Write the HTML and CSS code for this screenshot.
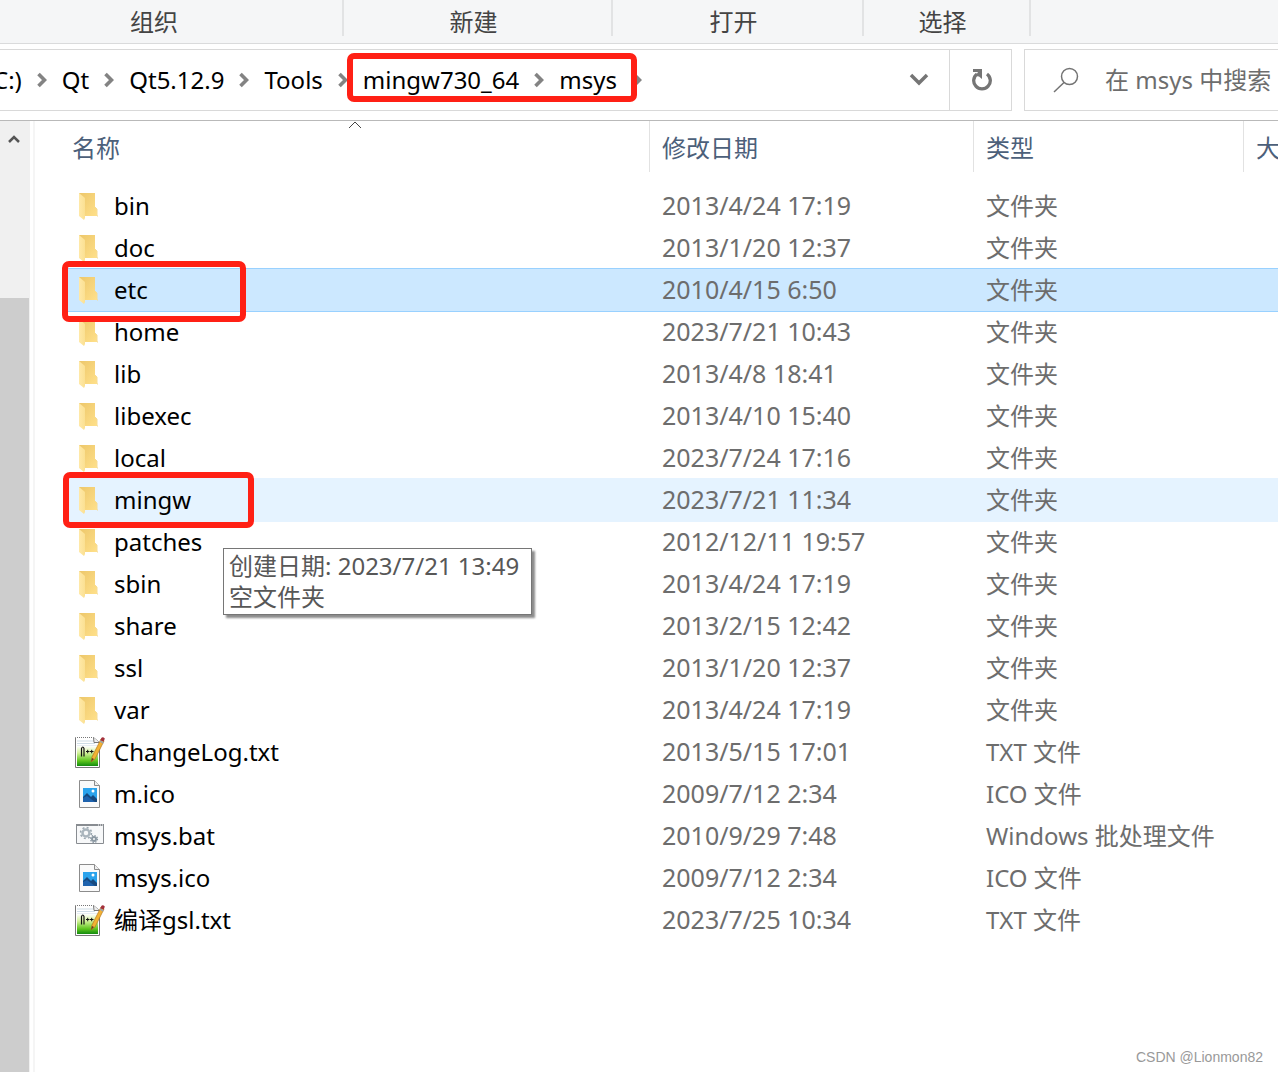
FILE: index.html
```
<!DOCTYPE html>
<html lang="zh-CN">
<head>
    <meta charset="UTF-8">
    <meta name="viewport" content="width=device-width, initial-scale=1.0">
    <title>msys</title>
    <link rel="stylesheet" href="styles.css">
</head>
<body>
    <!-- icons -->
    <svg class="defs" width="0" height="0">
        <defs>
            <linearGradient id="fold-front" x1="0" y1="0" x2="1" y2="0">
                <stop offset="0" stop-color="#ffe9a8"/>
                <stop offset="1" stop-color="#fbe092"/>
            </linearGradient>
            <linearGradient id="fold-back" x1="0" y1="0" x2="1" y2="1">
                <stop offset="0" stop-color="#edc76a"/>
                <stop offset="1" stop-color="#ffe08a"/>
            </linearGradient>
            <linearGradient id="note-green" x1="0" y1="0" x2="0" y2="1">
                <stop offset="0" stop-color="#ffffff"/>
                <stop offset="0.35" stop-color="#d3f29a"/>
                <stop offset="0.75" stop-color="#5cc41c"/>
                <stop offset="1" stop-color="#128a10"/>
            </linearGradient>
        </defs>
        <symbol id="folder" viewBox="0 0 32 32">
            <path d="M5 3h16v14l2 2v7H9z" fill="url(#fold-back)"/>
            <path d="M5 3l6 5v20l-1 2-5-4z" fill="url(#fold-front)"/>
            <path d="M21 17l2 2v7h1" fill="none" stroke="#f6dc95" stroke-width="1"/>
        </symbol>
        <symbol id="notepad" viewBox="0 0 32 32">
            <path d="M1.500 1.500h18l6 5v25h-24z" fill="#fff" stroke="#777"/>
            <path d="M2 1.500h17" stroke="#fff" stroke-width="2" stroke-dasharray="1 1"/>
            <path d="M3 5h16M3 7.500h18M3 10h20" stroke="#cfdde6"/>
            <path d="M3 10h21v20H3z" fill="url(#note-green)"/>
            <path d="M19.500 1.500l.5 5h5.500" fill="#eee" stroke="#777"/>
            <path d="M7.500 20.500v-8q1.300-3 2.500 0v8" fill="none" stroke="#111" stroke-width="1.200"/>
            <path d="M12 15.500h3.500M13.700 13.800v3.500M16 15.500h3.500M17.700 13.800v3.500" fill="none" stroke="#111"/>
            <path d="M17 26l1-5 9-18 3 2-9 18z" fill="#f3b233" stroke="#b4791c" stroke-width=".7"/>
            <path d="M17 26l1-4 2 1z" fill="#5a4424"/>
            <path d="M26.300 4.500l1-2.500q1.500-1.500 3.500.5l-1 3z" fill="#a3303c"/>
            <path d="M26 5l3.500 2" stroke="#9aa4ae" stroke-width="1.500"/>
        </symbol>
        <symbol id="image" viewBox="0 0 32 32">
            <path d="M5.500 2.500h15l5 5v22h-20z" fill="#fafafa" stroke="#8c8c8c"/>
            <path d="M20.500 2.500v5h5" fill="#eee" stroke="#8c8c8c"/>
            <path d="M9 10h14v14H9z" fill="#2ba3ec"/>
            <path d="M9 19l4-4 4 4 2-2 4 4v3H9z" fill="#17497f"/>
            <path d="M9 20l4-2 8 6H9z" fill="#1e62ad"/>
            <circle cx="19" cy="13" r="1.500" fill="#fff"/>
        </symbol>
        <symbol id="batch" viewBox="0 0 32 32">
            <path d="M2.500 4.500h27v19h-27z" fill="#f7f8f9" stroke="#888c91"/>
            <path d="M2 5h28" stroke="#888c91" stroke-width="2"/>
            <path d="M24 5h1M26 5h1M28 5h1" stroke="#fff"/>
            <circle cx="12" cy="13" r="3.500" fill="none" stroke="#aab5bd" stroke-width="2.500"/>
            <circle cx="12" cy="13" r="5.500" fill="none" stroke="#9ba7b0" stroke-width="1.500" stroke-dasharray="2 2.320"/>
            <circle cx="20" cy="19" r="2" fill="none" stroke="#8b98a2" stroke-width="2"/>
            <circle cx="20" cy="19" r="3.500" fill="none" stroke="#8b98a2" stroke-width="1.200" stroke-dasharray="1.400 1.350"/>
        </symbol>
        <symbol id="chevron" viewBox="0 0 10 16">
            <path d="M1.500 2l6 6-6 6" fill="none" stroke="#838383" stroke-width="3.600"/>
        </symbol>
    </svg>

    <div class="ribbon">
        <div class="group first">组织</div>
        <div class="group new">新建</div>
        <div class="group open">打开</div>
        <div class="group select">选择</div>
    </div>

    <div class="toolbar">
        <div class="address">
            <nav class="crumbs">
                <a href="#">C:)</a>
                <svg class="chevron"><use href="#chevron"/></svg>
                <a href="#">Qt</a>
                <svg class="chevron"><use href="#chevron"/></svg>
                <a href="#">Qt5.12.9</a>
                <svg class="chevron"><use href="#chevron"/></svg>
                <a href="#">Tools</a>
                <svg class="chevron"><use href="#chevron"/></svg>
                <span class="current">
                    <a href="#">mingw730_64</a>
                    <svg class="chevron"><use href="#chevron"/></svg>
                    <a href="#">msys</a>
                    <span class="mark mark-path"></span>
                </span>
                <svg class="chevron"><use href="#chevron"/></svg>
            </nav>
            <button class="history" aria-label="以前的位置">
                <svg width="20" height="14" viewBox="0 0 20 14"><path d="M2 3l8 8 8-8" fill="none" stroke="#757575" stroke-width="3.500"/></svg>
            </button>
            <button class="refresh" aria-label="刷新">
                <svg width="22" height="24" viewBox="0 0 22 24">
                    <path d="M17 7a8.300 8.300 0 1 1-10 0" fill="none" stroke="#757575" stroke-width="3.300"/>
                    <path d="M3 2h9v10L9 9.500 5.500 9 8 5H3z" fill="#757575"/>
                </svg>
            </button>
        </div>
        <div class="search">
            <svg width="26" height="26" viewBox="0 0 26 26"><circle cx="16.500" cy="9.500" r="8" fill="none" stroke="#737373" stroke-width="1.500"/><path d="M11 15.500L1 25" stroke="#737373" stroke-width="1.500"/></svg>
            <input type="text" placeholder="在 msys 中搜索" aria-label="在 msys 中搜索">
        </div>
    </div>

    <div class="main">
        <div class="scrollbar">
            <svg width="12" height="10" viewBox="0 0 12 10"><path d="M1 8l5-5 5 5" fill="none" stroke="#555" stroke-width="2.500"/></svg>
            <div class="thumb"></div>
        </div>
        <div class="pane">
            <table>
                <thead>
                    <tr>
                        <th class="name">名称
                            <svg class="sort" width="14" height="8" viewBox="0 0 14 8"><path d="M1 7l6-6 6 6" fill="none" stroke="#444"/></svg>
                        </th>
                        <th class="date">修改日期</th>
                        <th class="type">类型</th>
                        <th class="size">大小</th>
                    </tr>
                </thead>
                <tbody>
                    <tr><td><div class="file"><svg><use href="#folder"/></svg>bin</div></td><td class="time">2013/4/24 17:19</td><td>文件夹</td><td></td></tr>
                    <tr><td><div class="file"><svg><use href="#folder"/></svg>doc</div></td><td class="time">2013/1/20 12:37</td><td>文件夹</td><td></td></tr>
                    <tr class="selected"><td><div class="file"><svg><use href="#folder"/></svg>etc</div><span class="mark mark-etc"></span></td><td class="time">2010/4/15 6:50</td><td>文件夹</td><td></td></tr>
                    <tr><td><div class="file"><svg><use href="#folder"/></svg>home</div></td><td class="time">2023/7/21 10:43</td><td>文件夹</td><td></td></tr>
                    <tr><td><div class="file"><svg><use href="#folder"/></svg>lib</div></td><td class="time">2013/4/8 18:41</td><td>文件夹</td><td></td></tr>
                    <tr><td><div class="file"><svg><use href="#folder"/></svg>libexec</div></td><td class="time">2013/4/10 15:40</td><td>文件夹</td><td></td></tr>
                    <tr><td><div class="file"><svg><use href="#folder"/></svg>local</div></td><td class="time">2023/7/24 17:16</td><td>文件夹</td><td></td></tr>
                    <tr class="hover"><td><div class="file"><svg><use href="#folder"/></svg>mingw</div><span class="mark mark-mingw"></span><div class="tooltip">创建日期: 2023/7/21 13:49<br>空文件夹</div></td><td class="time">2023/7/21 11:34</td><td>文件夹</td><td></td></tr>
                    <tr><td><div class="file"><svg><use href="#folder"/></svg>patches</div></td><td class="time">2012/12/11 19:57</td><td>文件夹</td><td></td></tr>
                    <tr><td><div class="file"><svg><use href="#folder"/></svg>sbin</div></td><td class="time">2013/4/24 17:19</td><td>文件夹</td><td></td></tr>
                    <tr><td><div class="file"><svg><use href="#folder"/></svg>share</div></td><td class="time">2013/2/15 12:42</td><td>文件夹</td><td></td></tr>
                    <tr><td><div class="file"><svg><use href="#folder"/></svg>ssl</div></td><td class="time">2013/1/20 12:37</td><td>文件夹</td><td></td></tr>
                    <tr><td><div class="file"><svg><use href="#folder"/></svg>var</div></td><td class="time">2013/4/24 17:19</td><td>文件夹</td><td></td></tr>
                    <tr><td><div class="file"><svg><use href="#notepad"/></svg>ChangeLog.txt</div></td><td class="time">2013/5/15 17:01</td><td>TXT 文件</td><td></td></tr>
                    <tr><td><div class="file"><svg><use href="#image"/></svg>m.ico</div></td><td class="time">2009/7/12 2:34</td><td>ICO 文件</td><td></td></tr>
                    <tr><td><div class="file"><svg><use href="#batch"/></svg>msys.bat</div></td><td class="time">2010/9/29 7:48</td><td>Windows 批处理文件</td><td></td></tr>
                    <tr><td><div class="file"><svg><use href="#image"/></svg>msys.ico</div></td><td class="time">2009/7/12 2:34</td><td>ICO 文件</td><td></td></tr>
                    <tr><td><div class="file"><svg><use href="#notepad"/></svg>编译gsl.txt</div></td><td class="time">2023/7/25 10:34</td><td>TXT 文件</td><td></td></tr>
                </tbody>
            </table>
            <div class="watermark">CSDN @Lionmon82</div>
        </div>
    </div>
</body>
</html>
```

FILE: styles.css
```
* {
    box-sizing: border-box;
}
body {
    margin: 0;
    min-height: 100vh;
    display: flex;
    flex-direction: column;
    overflow: hidden;
    background: #fff;
    color: #000;
    font-family: "Noto Sans", "Noto Sans CJK SC", sans-serif;
    font-size: 24px;
    line-height: 32px;
}
button {
    border: none;
    background: none;
    padding: 0;
}
.defs {
    position: absolute;
}

/* ribbon */
.ribbon {
    display: flex;
    height: 44px;
    background: #f5f6f7;
    border-bottom: 1px solid #dadbdc;
    color: #444;
}
.group {
    height: 36px;
    padding: 6px 8px 0 0;
    border-right: 2px solid #e2e3e4;
    text-align: center;
}
.group.first {
    width: 344px;
    padding-right: 34px;
}
.group.new {
    width: 269px;
}
.group.open {
    width: 251px;
}
.group.select {
    width: 167px;
}

/* address bar and search */
.toolbar {
    display: flex;
    gap: 12px;
    height: 77px;
    padding: 5px 0 9px;
    border-bottom: 1px solid #b9b9b9;
}
.address {
    flex: none;
    width: 1012px;
    display: flex;
    border: 1px solid #d9d9d9;
    border-left: none;
}
.crumbs {
    flex: 1;
    display: flex;
    align-items: center;
    gap: 15px;
    margin-left: -7px;
}
.crumbs a {
    color: #000;
    text-decoration: none;
}
.chevron {
    width: 10px;
    height: 16px;
}
.current {
    position: relative;
    display: flex;
    align-items: center;
    gap: 15px;
}
.history {
    width: 60px;
}
.refresh {
    width: 62px;
    border-left: 1px solid #d9d9d9;
}
.search {
    flex: 1;
    min-width: 0;
    display: flex;
    align-items: center;
    gap: 26px;
    padding-left: 28px;
    border: 1px solid #d9d9d9;
    border-right: none;
}
.search svg {
    flex: none;
}
.search input {
    flex: 1;
    min-width: 0;
    padding: 0;
    border: none;
    outline: none;
    font: inherit;
}
.search input::placeholder {
    color: #6d6d6d;
}

/* file list */
.main {
    flex: 1;
    display: flex;
}
.scrollbar {
    flex: none;
    width: 30px;
    display: flex;
    flex-direction: column;
    background: #f0f0f0;
}
.scrollbar svg {
    margin: 13px 0 0 8px;
}
.thumb {
    flex: 1;
    width: 29px;
    margin-top: 154px;
    background: #cdcdcd;
}
.pane {
    flex: 1;
    min-width: 0;
    display: flex;
    flex-direction: column;
    margin-left: 3px;
    padding-left: 31px;
    border-left: 2px solid #f5f5f5;
}
table {
    width: 100%;
    table-layout: fixed;
    border-collapse: separate;
    border-spacing: 0;
}
th {
    position: relative;
    height: 51px;
    padding: 2px 0 0 12px;
    border-left: 1px solid #e2e2e2;
    color: #4c607a;
    font-weight: normal;
    text-align: left;
    white-space: nowrap;
}
th.name {
    width: 583px;
    padding-left: 6px;
    border-left: none;
}
th.date {
    width: 324px;
}
th.type {
    width: 270px;
}
.sort {
    position: absolute;
    top: 0;
    left: 50%;
    margin-left: -10px;
}
tbody::before {
    content: "";
    display: block;
    height: 13px;
}
td {
    position: relative;
    height: 42px;
    padding: 0 0 0 13px;
    color: #6d6d6d;
    white-space: nowrap;
}
td:first-child {
    padding-left: 8px;
    color: #000;
}
.time {
    padding-bottom: 2px;
    font-size: 25px;
}
.file {
    display: flex;
    align-items: center;
    gap: 8px;
}
.file svg {
    width: 32px;
    height: 32px;
}
.selected td {
    background: #cce8ff;
    box-shadow: 0 -1px #99d1ff, 0 1px #99d1ff;
}
.hover td {
    background: #e5f3ff;
    box-shadow: 0 -1px #e5f3ff, 0 1px #e5f3ff;
}
.tooltip {
    position: absolute;
    z-index: 2;
    top: 69px;
    left: 157px;
    width: 309px;
    padding: 1px 5px 2px;
    border: 1px solid #767676;
    background: #fff;
    box-shadow: 3px 3px 2px #8c8c8c;
    color: #575757;
    line-height: 31px;
}

/* red marks */
.mark {
    position: absolute;
    z-index: 1;
    border: 6px solid #ff2015;
    border-radius: 7px;
}
.mark-path {
    top: -11px;
    right: -20px;
    bottom: -6px;
    left: -16px;
}
.mark-etc {
    top: -8px;
    left: -4px;
    width: 184px;
    height: 61px;
}
.mark-mingw {
    top: -7px;
    left: -3px;
    width: 191px;
    height: 56px;
}

.watermark {
    margin-top: auto;
    padding: 0 15px 5px 0;
    color: #999;
    font-family: "Liberation Sans", sans-serif;
    font-size: 14px;
    line-height: 20px;
    text-align: right;
}
```
